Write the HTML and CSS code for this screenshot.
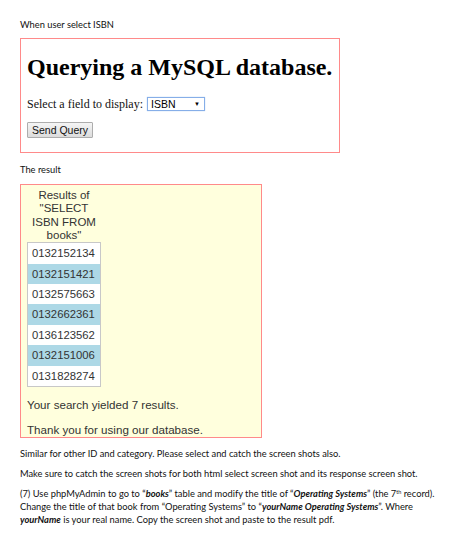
FILE: index.html
```html
<!DOCTYPE html>
<html>
<head>
<meta charset="utf-8">
<link rel="stylesheet" href="styles.css">
</head>
<body>
<div class="page">
  <p class="doc first">When user select ISBN</p>
  <div class="shot form-shot">
    <h1 class="title">Querying a MySQL database.</h1>
    <div class="field-row">
      <span class="label">Select a field to display:</span>
      <span class="select"><span class="select-text">ISBN</span><span class="arrow">&#9660;</span></span>
    </div>
    <div class="btn">Send Query</div>
  </div>
  <p class="doc result-label">The result</p>
  <div class="shot result-shot">
    <div class="results">
      <div class="caption">Results of<br>"SELECT<br>ISBN FROM<br>books"</div>
      <div class="table">
        <div class="row">0132152134</div>
        <div class="row alt">0132151421</div>
        <div class="row">0132575663</div>
        <div class="row alt">0132662361</div>
        <div class="row">0136123562</div>
        <div class="row alt">0132151006</div>
        <div class="row">0131828274</div>
      </div>
    </div>
    <p class="msg msg1">Your search yielded 7 results.</p>
    <p class="msg msg2">Thank you for using our database.</p>
  </div>
  <p class="doc p1">Similar for other ID and category. Please select and catch the screen shots also.</p>
  <p class="doc p2">Make sure to catch the screen shots for both html select screen shot and its response screen shot.</p>
  <p class="doc p3">(7) Use phpMyAdmin to go to “<b><i>books</i></b>” table and modify the title of “<b><i>Operating Systems</i></b>” (the 7<sup>th</sup> record).<br>Change the title of that book from “Operating Systems” to “<b><i>yourName Operating Systems</i></b>”. Where<br><b><i>yourName</i></b> is your real name. Copy the screen shot and paste to the result pdf.</p>
</div>
</body>
</html>
```

FILE: styles.css
```css
html, body {
  margin: 0;
  padding: 0;
  background: #ffffff;
}
.page {
  width: 467px;
  height: 547px;
  padding: 0 0 0 20px;
  box-sizing: border-box;
  overflow: hidden;
}
.doc {
  font-family: Lato, "Open Sans", sans-serif;
  font-size: 9.3px;
  color: #111;
  margin: 0;
  line-height: 13px;
  white-space: nowrap;
}
.first {
  padding-top: 18px;
}
.shot {
  border: 1px solid #ff8a8a;
  box-sizing: border-box;
}
.form-shot {
  margin-top: 7px;
  width: 320px;
  height: 115px;
  padding: 0 0 0 6px;
  display: flex;
  flex-direction: column;
  align-items: flex-start;
}
.title {
  font-family: "Liberation Serif", "Times New Roman", serif;
  font-weight: bold;
  font-size: 24px;
  line-height: 27px;
  margin: 15px 0 0 0;
  color: #000;
}
.field-row {
  margin-top: 16px;
  display: flex;
  align-items: center;
  height: 14px;
}
.label {
  font-family: "Liberation Serif", "Times New Roman", serif;
  font-size: 12px;
  color: #111;
}
.select {
  margin-left: 4px;
  width: 58px;
  height: 14px;
  box-sizing: border-box;
  border: 1px solid #86aee8;
  box-shadow: 0 0 1px #a8c8f0;
  background: #fff;
  display: flex;
  align-items: center;
  justify-content: space-between;
  padding: 0 4px 0 3px;
  font-family: "Liberation Sans", Arial, sans-serif;
  font-size: 10.5px;
  color: #000;
}
.arrow {
  font-size: 6px;
}
.btn {
  margin-top: 11px;
  width: 66px;
  height: 16px;
  box-sizing: border-box;
  border: 1px solid #adadad;
  border-radius: 1px;
  background: linear-gradient(#f5f5f5, #dcdcdc);
  font-family: "Liberation Sans", Arial, sans-serif;
  font-size: 10.5px;
  color: #111;
  display: flex;
  align-items: center;
  justify-content: center;
}
.result-label {
  margin-top: 10px;
}
.result-shot {
  margin-top: 8px;
  width: 242px;
  height: 254px;
  background: #ffffdd;
  padding: 4px 0 0 6px;
}
.results {
  width: 74px;
  display: flex;
  flex-direction: column;
}
.caption {
  font-family: "Liberation Sans", Arial, sans-serif;
  font-size: 11.5px;
  line-height: 13.3px;
  color: #333;
  text-align: center;
}
.table {
  border: 1px solid #c8c8c8;
  background: #fff;
}
.row {
  font-family: "Liberation Sans", Arial, sans-serif;
  font-size: 11.3px;
  color: #333;
  height: 20.4px;
  line-height: 20.4px;
  padding-left: 4px;
  background: #fff;
}
.row.alt {
  background: #add8e6;
}
.msg {
  font-family: "Liberation Sans", Arial, sans-serif;
  font-size: 11.6px;
  color: #333;
  margin: 0;
  line-height: 14px;
}
.msg1 {
  margin-top: 11px;
}
.msg2 {
  margin-top: 11px;
}
.p1 {
  margin-top: 9px;
}
.p2 {
  margin-top: 7px;
}
.p3 {
  margin-top: 7px;
}
sup {
  font-size: 5.5px;
  line-height: 0;
  vertical-align: 3px;
}
```
